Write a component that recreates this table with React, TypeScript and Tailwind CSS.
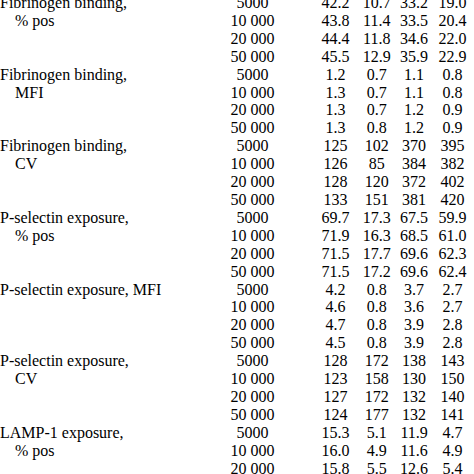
type Row = { label?: string; indent?: boolean; n: string; v: string[] };

const rows: Row[] = [
  { label: "Fibrinogen binding,", n: "5000", v: ["42.2", "10.7", "33.2", "19.0"] },
  { label: "% pos", indent: true, n: "10 000", v: ["43.8", "11.4", "33.5", "20.4"] },
  { n: "20 000", v: ["44.4", "11.8", "34.6", "22.0"] },
  { n: "50 000", v: ["45.5", "12.9", "35.9", "22.9"] },
  { label: "Fibrinogen binding,", n: "5000", v: ["1.2", "0.7", "1.1", "0.8"] },
  { label: "MFI", indent: true, n: "10 000", v: ["1.3", "0.7", "1.1", "0.8"] },
  { n: "20 000", v: ["1.3", "0.7", "1.2", "0.9"] },
  { n: "50 000", v: ["1.3", "0.8", "1.2", "0.9"] },
  { label: "Fibrinogen binding,", n: "5000", v: ["125", "102", "370", "395"] },
  { label: "CV", indent: true, n: "10 000", v: ["126", "85", "384", "382"] },
  { n: "20 000", v: ["128", "120", "372", "402"] },
  { n: "50 000", v: ["133", "151", "381", "420"] },
  { label: "P-selectin exposure,", n: "5000", v: ["69.7", "17.3", "67.5", "59.9"] },
  { label: "% pos", indent: true, n: "10 000", v: ["71.9", "16.3", "68.5", "61.0"] },
  { n: "20 000", v: ["71.5", "17.7", "69.6", "62.3"] },
  { n: "50 000", v: ["71.5", "17.2", "69.6", "62.4"] },
  { label: "P-selectin exposure, MFI", n: "5000", v: ["4.2", "0.8", "3.7", "2.7"] },
  { n: "10 000", v: ["4.6", "0.8", "3.6", "2.7"] },
  { n: "20 000", v: ["4.7", "0.8", "3.9", "2.8"] },
  { n: "50 000", v: ["4.5", "0.8", "3.9", "2.8"] },
  { label: "P-selectin exposure,", n: "5000", v: ["128", "172", "138", "143"] },
  { label: "CV", indent: true, n: "10 000", v: ["123", "158", "130", "150"] },
  { n: "20 000", v: ["127", "172", "132", "140"] },
  { n: "50 000", v: ["124", "177", "132", "141"] },
  { label: "LAMP-1 exposure,", n: "5000", v: ["15.3", "5.1", "11.9", "4.7"] },
  { label: "% pos", indent: true, n: "10 000", v: ["16.0", "4.9", "11.6", "4.9"] },
  { n: "20 000", v: ["15.8", "5.5", "12.6", "5.4"] },
];

// widths of the four value columns (centres at ~341, 383, 421, 460)
const valCls = [
  "ml-[28px] w-[42px]",
  "w-[42px]",
  "w-[34px]",
  "w-[44px]",
];

export default function App() {
  return (
    <main className="w-[474px] h-[474px] overflow-hidden bg-white text-black">
      <div className="-mt-[6px] font-['Liberation_Serif',serif] text-[16px] leading-[17.9px]">
        {rows.map((r, i) => (
          <div key={i} className="flex whitespace-nowrap">
            {/* LABEL */}
            <div className={`w-[222px] ${r.indent ? "pl-[15px]" : ""}`}>{r.label ?? ""}</div>

            {/* PLATELET COUNT */}
            <div className="w-[70px] flex justify-center">{r.n}</div>

            {/* VALUES */}
            {r.v.map((v, j) => (
              <div key={j} className={`${valCls[j]} flex justify-center`}>
                {v}
              </div>
            ))}
          </div>
        ))}
      </div>
    </main>
  );
}
